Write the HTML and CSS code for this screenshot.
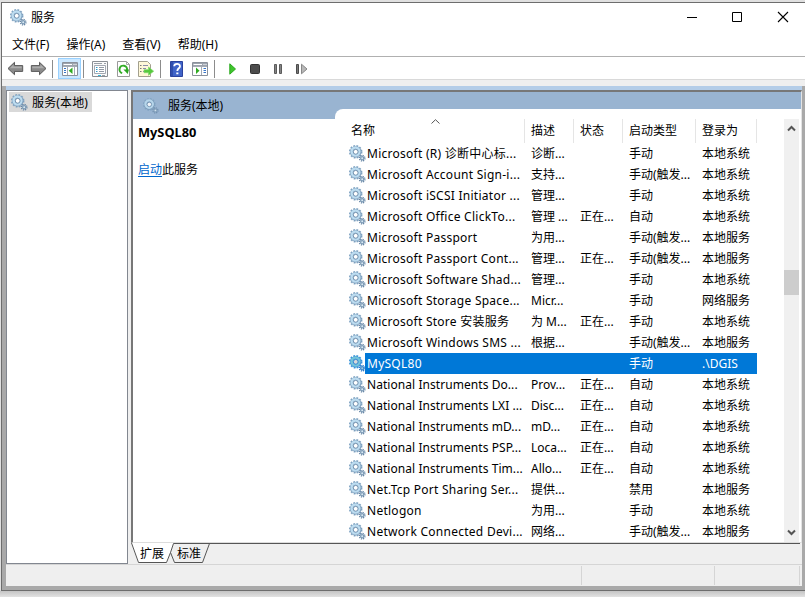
FILE: index.html
```html
<!DOCTYPE html>
<html lang="zh-CN">
<head>
  <meta charset="UTF-8" />
  <title>服务</title>
  <link rel="stylesheet" href="styles.css">
</head>
<body>

  <svg class="defs" width="0" height="0">
    <symbol id="gear" viewBox="0 0 17 17">
      <circle cx="6.7" cy="6.8" r="5.9" fill="none" stroke="#7fa3c2" stroke-width="1.7" stroke-dasharray="1.8 1.29"/>
      <circle cx="6.7" cy="6.8" r="4.1" fill="none" stroke="#7898b6" stroke-width="3.2"/>
      <circle cx="6.5" cy="6.5" r="3.9" fill="none" stroke="#bcdcf0" stroke-width="2.5"/>
      <circle cx="6.7" cy="6.8" r="2.4" fill="#fff" stroke="#6788a8" stroke-width=".9"/>
      <circle cx="13.2" cy="13.2" r="2.7" fill="none" stroke="#6685a4" stroke-width="1.4" stroke-dasharray="1.2 .92"/>
      <circle cx="13.2" cy="13.2" r="1.6" fill="#d8e8f2" stroke="#7d9bb6" stroke-width="1.2"/>
    </symbol>
    <symbol id="arrow" viewBox="0 0 17 15">
      <path d="M1 7.5 7.5 1.3V4.6H15.7V10.4H7.5V13.7Z" fill="#8b8b8b" stroke="#595959"/>
      <path d="M2.8 7.2 6.5 3.6V5.6H14.7V7.2Z" fill="#adadad"/>
    </symbol>
  </svg>

  <div class="window">
    <div class="titlebar">
      <svg class="gear" width="17" height="17"><use href="#gear"/></svg>
      <span class="title">服务</span>
      <svg class="controls" width="110" height="20" fill="none" stroke="#000">
        <path d="M1 10.5H11"/>
        <path d="M46.5 5.5H55.5V14.5H46.5Z"/>
        <path d="M92 5 102 15M102 5 92 15" stroke-width="1.1"/>
      </svg>
    </div>

    <div class="menubar">
      <span>文件(F)</span>
      <span>操作(A)</span>
      <span>查看(V)</span>
      <span>帮助(H)</span>
    </div>

    <div class="toolbar">
      <svg class="back" width="17" height="15"><use href="#arrow"/></svg>
      <svg class="forward" width="17" height="15"><use href="#arrow"/></svg>
      <i class="sep"></i>
      <span class="pressed">
        <svg width="16" height="14" viewBox="0 0 16 14">
          <path d="M.5.5H15.5V13.5H.5Z" fill="#fff" stroke="#8a909a"/>
          <path d="M1 1H15V4H1Z" fill="#9da4ae"/>
          <path d="M1.5 2.5H10M11.5 2.5H12.5M13.5 2.5H14.5" stroke="#fff"/>
          <path d="M1 4.5H15M5.5 5V13M12.5 5V13" stroke="#a5abb4"/>
          <path d="M2 6.5H4M2 8.5H4M2 10.5H4" stroke="#3875c8"/>
          <path d="M10.5 5.5V12L6.7 8.8Z" fill="#2faa20"/>
        </svg>
      </span>
      <i class="sep"></i>
      <svg class="properties" width="16" height="16">
        <path d="M.5.5H15.5V15.5H.5Z" fill="#fafafa" stroke="#8b8f94"/>
        <path d="M2 2.5H10M12 2.5H14" stroke="#9aa0a8"/>
        <path d="M2.5 4.5H13.5V12.5H2.5Z" fill="#fff" stroke="#a3a9b2"/>
        <path d="M4 6.5H5.5M4 8.5H5.5M4 10.5H5.5" stroke="#2f9ac8"/>
        <path d="M7 6.5H12M7 8.5H12M7 10.5H12" stroke="#9299a4"/>
        <path d="M6 14.5H9" stroke="#31b7dc"/><path d="M10 14.5H13" stroke="#9aa0a8"/>
      </svg>
      <svg class="refresh" width="13" height="16">
        <path d="M.5.5H9.5L12.5 3.5V15.5H.5Z" fill="#fff" stroke="#9a9a9a"/>
        <path d="M9.5.5V3.5H12.5" fill="none" stroke="#aaa"/>
        <path d="M5.2 12.1A3.8 3.8 0 1 1 10 9.2" fill="none" stroke="#35ad28" stroke-width="2"/>
        <path d="M6.4 8.5H12L10.7 13Z" fill="#2aa51f"/>
      </svg>
      <svg class="export" width="17" height="16">
        <path d="M.5.5H9.5L12.5 3.5V15.5H.5Z" fill="#fff8d8" stroke="#a3a08e"/>
        <path d="M2 4.5H3.5M2 7.5H3.5M2 10.5H3.5" stroke="#777"/>
        <path d="M5 4.5H10M5 7.5H8M5 10.5H8" stroke="#8b8baa"/>
        <path d="M6 8.7H10.5V6L15.7 10.2 10.5 14.3V11.7H6Z" fill="#55ca3c" stroke="#84d56e" stroke-width=".7"/>
      </svg>
      <i class="sep"></i>
      <svg class="help" width="13" height="16">
        <path d="M.5.5H12.5V15.5H.5Z" fill="#3f63c8" stroke="#2b429d"/>
        <path d="M1 1H3V15H1Z" fill="#2f4dad"/>
        <path d="M4.2 5.3C4.2 1.9 10 2 10 5.2 10 7.3 7.4 7.3 7.3 10M6.3 12.3H8.4" fill="none" stroke="#fff" stroke-width="1.8"/>
      </svg>
      <svg class="panel-icon" width="16" height="14">
        <path d="M.5.5H15.5V13.5H.5Z" fill="#fff" stroke="#8a909a"/>
        <path d="M1 1H15V4H1Z" fill="#9da4ae"/>
        <path d="M1.5 2.5H10M11.5 2.5H12.5M13.5 2.5H14.5" stroke="#fff"/>
        <path d="M1 4.5H15M9.5 5V13" stroke="#a5abb4"/>
        <path d="M11.5 6.5H14M11.5 8.5H14M11.5 10.5H14" stroke="#3875c8"/>
        <path d="M4 5.5V12L7.5 8.8Z" fill="#2faa20"/>
      </svg>
      <i class="sep"></i>
      <svg class="run" width="90" height="12">
        <path d="M.8.8 6.5 6 .8 11.2Z" fill="#3fc42d" stroke="#29a91c"/>
        <rect x="21.5" y="1.5" width="9" height="9" rx="1" fill="#4c4c4c" stroke="#333"/>
        <path d="M45.5 1.5H47.5V10.5H45.5ZM50.5 1.5H52.5V10.5H50.5Z" fill="#858585" stroke="#5b5b5b"/>
        <path d="M67.5 1.5H69.5V10.5H67.5Z" fill="#777" stroke="#4c4c4c"/>
        <path d="M72.5 1.2 78 6 72.5 10.8Z" fill="#b8b8b8" stroke="#888"/>
      </svg>
    </div>

    <div class="frame">
      <div class="panes">
        <div class="tree">
          <div class="tree-item">
            <svg class="gear" width="17" height="17"><use href="#gear"/></svg>
            <span>服务(本地)</span>
          </div>
        </div>

        <div class="main">
          <div class="content">
            <div class="banner">
              <svg class="gear" width="16" height="16"><use href="#gear"/></svg>
              <span>服务(本地)</span>
            </div>
            <div class="split">
              <div class="detail">
                <h2>MySQL80</h2>
                <p><a>启动</a>此服务</p>
              </div>
              <div class="list">
                <div class="columns">
                  <div class="head">
                    <span>名称<svg class="sort" width="9" height="5"><path d="M.5 4.5 4.5.7 8.5 4.5" fill="none" stroke="#555"/></svg></span>
                    <span>描述</span>
                    <span>状态</span>
                    <span>启动类型</span>
                    <span>登录为</span>
                  </div>
                  <div id="rows"></div>
                </div>
                <div class="scrollbar">
                  <svg width="9" height="7"><path d="M1 5.5 4.5 2 8 5.5" fill="none" stroke="#555" stroke-width="2"/></svg>
                  <div class="thumb"></div>
                  <svg width="9" height="7"><path d="M1 1.5 4.5 5 8 1.5" fill="none" stroke="#555" stroke-width="2"/></svg>
                </div>
              </div>
            </div>
          </div>
          <div class="tabs">
            <svg class="tab-shape" width="670" height="21">
              <path d="M0 0H42.5L36 19.5H7Z" fill="#fff"/>
              <path d="M.5 0 7.5 19.5H35.5L39.5 9.5M669 .5H42.5L39.5 9.5 43.5 19.5H71.5L78.5.5" fill="none" stroke="#555"/>
            </svg>
            <span>扩展</span>
            <span>标准</span>
          </div>
        </div>
      </div>
      <div class="statusbar"><i></i><i></i><i></i></div>
    </div>
  </div>

  <script>
    const services = [
      ['Microsoft (R) 诊断中心标...', '诊断...', '', '手动', '本地系统'],
      ['Microsoft Account Sign-i...', '支持...', '', '手动(触发...', '本地系统'],
      ['Microsoft iSCSI Initiator ...', '管理...', '', '手动', '本地系统'],
      ['Microsoft Office ClickTo...', '管理 ...', '正在...', '自动', '本地系统'],
      ['Microsoft Passport', '为用...', '', '手动(触发...', '本地服务'],
      ['Microsoft Passport Cont...', '管理...', '正在...', '手动(触发...', '本地服务'],
      ['Microsoft Software Shad...', '管理...', '', '手动', '本地系统'],
      ['Microsoft Storage Space...', 'Micr...', '', '手动', '网络服务'],
      ['Microsoft Store 安装服务', '为 M...', '正在...', '手动', '本地系统'],
      ['Microsoft Windows SMS ...', '根据...', '', '手动(触发...', '本地服务'],
      ['MySQL80', '', '', '手动', '.\\DGIS'],
      ['National Instruments Do...', 'Prov...', '正在...', '自动', '本地系统'],
      ['National Instruments LXI ...', 'Disc...', '正在...', '自动', '本地系统'],
      ['National Instruments mD...', 'mD...', '正在...', '自动', '本地系统'],
      ['National Instruments PSP...', 'Loca...', '正在...', '自动', '本地系统'],
      ['National Instruments Tim...', 'Allo...', '正在...', '自动', '本地系统'],
      ['Net.Tcp Port Sharing Ser...', '提供...', '', '禁用', '本地服务'],
      ['Netlogon', '为用...', '', '手动', '本地系统'],
      ['Network Connected Devi...', '网络...', '', '手动(触发...', '本地服务']
    ];

    document.getElementById('rows').innerHTML = services.map(s => `
      <div class="row${s[0] === 'MySQL80' ? ' selected' : ''}${s[0].startsWith('National') ? ' tight' : ''}">
        <svg class="gear" width="17" height="17"><use href="#gear"/></svg>
        ${s.map(text => `<span>${text}</span>`).join('')}
      </div>`).join('');
  </script>

</body>
</html>
```

FILE: styles.css
```css
* {
  box-sizing: border-box;
}
body {
  margin: 0;
  padding: 2px 0 0 1px;
  width: 805px;
  height: 597px;
  overflow: hidden;
  background: linear-gradient(#e0e0e0 590px, #c4c4c4 591px, #e2e2e2 597px);
  color: #000;
  font: 12px/20px "Noto Sans", "Noto Sans CJK SC", sans-serif;
  white-space: nowrap;
}
svg {
  display: block;
  flex: none;
}
.defs {
  position: absolute;
}
.window {
  display: flex;
  flex-direction: column;
  height: 589px;
  background: #fff;
  border: 1px solid #6d6d6d;
  border-right: 0;
}
.titlebar {
  display: flex;
  align-items: center;
  height: 29px;
  padding-left: 8px;
}
.title {
  margin-left: 4px;
}
.controls {
  margin: -2px 9px 0 auto;
}
.menubar {
  display: flex;
  gap: 17px;
  height: 24px;
  padding: 3px 0 0 10px;
}
.toolbar {
  display: flex;
  align-items: center;
  height: 24px;
  padding: 1px 0 0 5px;
  border-top: 1px solid #b0b0b0;
  border-bottom: 1px solid #d9d9d9;
}
.forward {
  margin-left: 6px;
  transform: scaleX(-1);
}
.sep {
  width: 1px;
  height: 18px;
  background: #8c8c8c;
  margin: 0 5px;
}
.pressed {
  display: flex;
  align-items: center;
  justify-content: center;
  width: 23px;
  height: 21px;
  background: #cce8ff;
  border: 1px solid #99d1ff;
}
.pressed + .sep {
  margin: 0 8px 0 2px;
}
.refresh {
  margin-left: 9px;
}
.export {
  margin-left: 8px;
}
.export + .sep {
  margin: 0 9px 0 5px;
}
.panel-icon {
  margin-left: 9px;
}
.panel-icon + .sep {
  margin: 0 14px 0 6px;
}
.frame {
  display: flex;
  flex-direction: column;
  flex: 1;
  margin-top: 6px;
  background: #efefef;
  border: solid #a9a9a9;
  border-width: 0 3px 4px 4px;
  box-shadow: 0 -6px #efefef;
}
.panes {
  display: flex;
  gap: 3px;
  height: 478px;
  padding-top: 4px;
  background: linear-gradient(#b4cde8 4px, #efefef 4px);
}
.tree {
  width: 122px;
  padding: 1px 2px;
  background: #fff;
  border: 1px solid #828790;
}
.tree-item {
  display: flex;
  align-items: center;
  width: 83px;
  height: 20px;
  padding-left: 2px;
  background: #d9d9d9;
}
.tree-item span {
  margin: 1px 0 0 4px;
  letter-spacing: 0.15px;
}
.main {
  flex: 1;
}
.content {
  height: 453px;
  background: #fff;
  border: 2px solid #777;
  border-right: 1px solid #e3e3e3;
  border-bottom: 1px solid #dcdcdc;
}
.banner {
  display: flex;
  align-items: center;
  height: 27px;
  padding-left: 10px;
  background: #99b4d1;
}
.banner .gear {
  opacity: .85;
}
.banner span {
  margin-left: 9px;
}
.split {
  display: flex;
  height: 423px;
}
.detail {
  width: 202px;
  padding-left: 5px;
}
.detail h2 {
  margin: 3px 0 18px;
  font-size: 12.8px;
  line-height: 20px;
}
.detail p {
  margin: 0;
}
.detail a {
  color: #0066cc;
  text-decoration: underline;
  text-underline-offset: 2px;
}
.list {
  display: flex;
  flex: 1;
  margin-top: -10px;
  padding-top: 10px;
  background: #fff;
  border-top-left-radius: 8px;
}
.columns {
  width: 449px;
}
.head {
  display: grid;
  grid-template-columns: 190px 49px 49px 73px 61px;
  height: 24px;
  line-height: 23px;
}
.head span {
  position: relative;
  padding-left: 6px;
  border-right: 1px solid #e5e5e5;
}
.head span:first-child {
  padding-left: 16px;
}
.sort {
  position: absolute;
  left: 96px;
  top: 0;
}
.row {
  display: grid;
  grid-template-columns: 30px 160px 49px 49px 73px 61px;
  height: 21px;
  line-height: 21px;
}
.row .gear {
  margin: 2px 0 0 14px;
}
.row span {
  padding-left: 6px;
}
.row span:nth-of-type(1) {
  padding-left: 2px;
  letter-spacing: 0.26px;
}
.row.tight span:nth-of-type(1) {
  letter-spacing: 0.06px;
}
.row.selected {
  width: 422px;
  color: #fff;
  background: linear-gradient(90deg, transparent 30px, #0078d7 30px);
}
.row.selected .gear {
  filter: saturate(3) brightness(.85);
}
.scrollbar {
  display: flex;
  flex-direction: column;
  align-items: center;
  width: 15px;
  padding: 6px 0;
  background: #f0f0f0;
}
.thumb {
  width: 15px;
  height: 25px;
  margin: 138px 0 auto;
  background: #cdcdcd;
}
.tabs {
  display: flex;
  position: relative;
  gap: 13px;
  padding: 1px 0 0 9px;
}
.tab-shape {
  position: absolute;
  left: 0;
  top: 0;
}
.tabs span {
  position: relative;
}
.statusbar {
  display: flex;
  justify-content: flex-end;
  flex: 1;
  padding: 1px 2px 1px 0;
  border-top: 1px solid #d5d5d5;
}
.statusbar i {
  width: 133px;
  border-right: 1px solid #d5d5d5;
}
.statusbar i:last-child {
  width: 85px;
}
```
